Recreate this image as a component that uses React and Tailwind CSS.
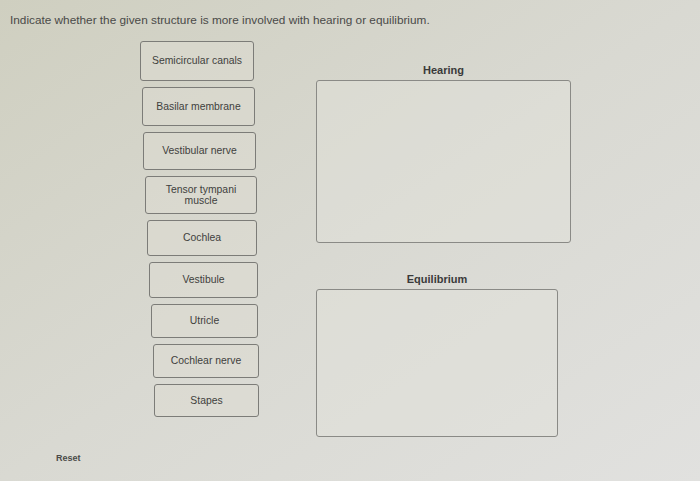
import React from 'react';

// Drag-and-drop labeling question: structures on the left, two drop zones on the right
const structures = [
    { label: 'Semicircular canals', cls: 'ml-[140px] w-[114px] h-[40px]' },
    { label: 'Basilar membrane', cls: 'ml-[142px] w-[113px] h-[39px]' },
    { label: 'Vestibular nerve', cls: 'ml-[143px] w-[113px] h-[38px]' },
    { label: 'Tensor tympani muscle', cls: 'ml-[145px] w-[112px] h-[38px] px-[18px] leading-[11px]' },
    { label: 'Cochlea', cls: 'ml-[147px] w-[110px] h-[36px]' },
    { label: 'Vestibule', cls: 'ml-[149px] w-[109px] h-[36px]' },
    { label: 'Utricle', cls: 'ml-[151px] w-[107px] h-[34px]' },
    { label: 'Cochlear nerve', cls: 'ml-[153px] w-[106px] h-[34px]' },
    { label: 'Stapes', cls: 'ml-[154px] w-[105px] h-[33px]' },
];

const DropZone = ({ title, titleCls, boxCls }) => (
    <div className="flex flex-col">
        <div className={`text-[11px] font-bold text-[#3a3a3a] text-center ${titleCls}`}>{title}</div>
        <div className={`border border-[#8a8a86] rounded-[3px] bg-[#e4e4dc]/40 ${boxCls}`}></div>
    </div>
);

const App = () => {
    return (
        <div
            className="w-[700px] h-[481px] overflow-hidden bg-gradient-to-br from-[#cfcfc0] via-[#d9d9d2] to-[#e1e1df] text-[#444]"
            style={{ fontFamily: '"Liberation Sans", Arial, sans-serif' }}
        >
            <div className="pl-[10px] pt-[13px] text-[11.8px] text-[#4a4a48] leading-[14px]">
                Indicate whether the given structure is more involved with hearing or equilibrium.
            </div>

            <div className="flex">
                {/* draggable structure tiles */}
                <div className="flex flex-col gap-[6px] pt-[14px] w-[300px]">
                    {structures.map((s) => (
                        <div
                            key={s.label}
                            className={`flex items-center justify-center text-center text-[10.4px] text-[#3f3f3d] border border-[#7c7c78] rounded-[3px] bg-[#dedcd2]/50 ${s.cls}`}
                        >
                            {s.label}
                        </div>
                    ))}
                </div>

                {/* target zones */}
                <div className="flex flex-col pt-[35px] ml-[16px]">
                    <DropZone title="Hearing" titleCls="w-[255px] mb-[1px]" boxCls="w-[255px] h-[163px]" />
                    <div className="h-[28px]"></div>
                    <DropZone title="Equilibrium" titleCls="w-[242px] mb-[2px]" boxCls="w-[242px] h-[148px]" />
                </div>
            </div>

            <div className="pl-[56px] pt-[15px] text-[9px] font-bold text-[#4a4a48]">Reset</div>
        </div>
    );
};

export default App;
